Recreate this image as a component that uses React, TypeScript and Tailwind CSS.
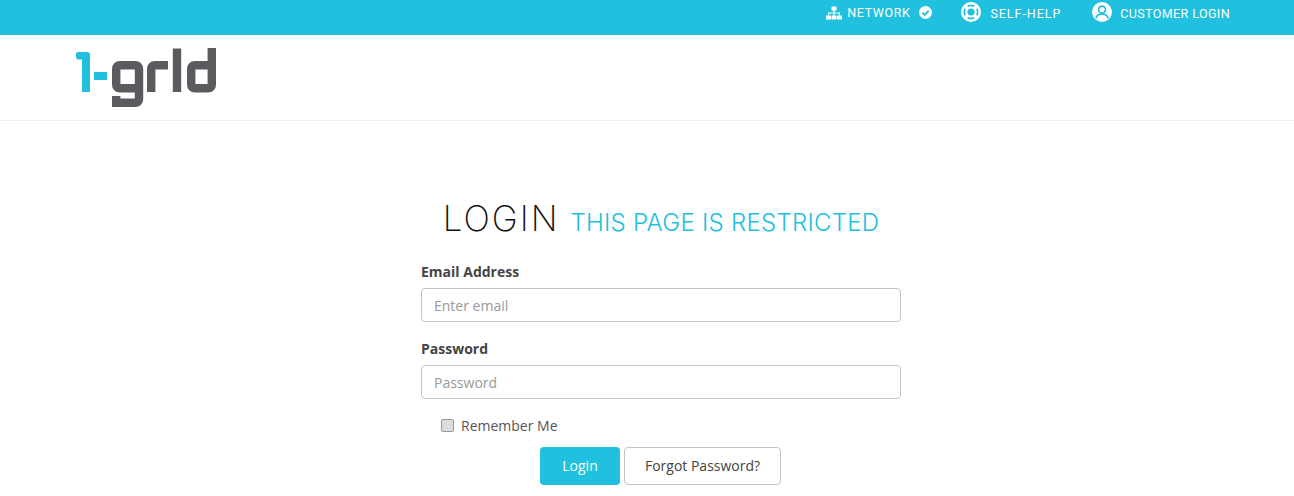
import React from "react";

function SitemapIcon() {
  return (
    <svg width="16" height="14" viewBox="0 0 16 14" fill="#fff">
      <rect x="5.500" y="0.500" width="5" height="4" rx="0.500" />
      <rect x="0" y="9.500" width="5" height="4" rx="0.500" />
      <rect x="5.500" y="9.500" width="5" height="4" rx="0.500" />
      <rect x="11" y="9.500" width="5" height="4" rx="0.500" />
      <path d="M7.400 4h1.200v2.400H14v3.200h-1.200V7.600H8.600v2H7.400v-2H3.200v2H2V6.400h5.400z" />
    </svg>
  );
}

function CheckCircle() {
  return (
    <svg width="13" height="13" viewBox="0 0 14 14">
      <circle cx="7" cy="7" r="7" fill="#fff" />
      <path d="M3.700 7.200l2.400 2.400 4.300-4.400" fill="none" stroke="#20c0de" strokeWidth="2" />
    </svg>
  );
}

function LifeRing() {
  return (
    <svg width="20" height="20" viewBox="0 0 20 20">
      <g fill="none" stroke="#fff">
        <circle cx="10" cy="10" r="8.800" strokeWidth="2.400" />
        <circle cx="10" cy="10" r="4.700" strokeWidth="2.200" />
        <path d="M4 4l3 3M16 4l-3 3M4 16l3-3M16 16l-3-3" strokeWidth="3.600" />
      </g>
    </svg>
  );
}

function UserCircle() {
  return (
    <svg width="20" height="20" viewBox="0 0 20 20">
      <circle cx="10" cy="10" r="10" fill="#fff" />
      <circle cx="10" cy="7.600" r="3.500" fill="none" stroke="#20c0de" strokeWidth="1.700" />
      <path d="M4 16.400c.5-3 2.800-4.200 6-4.200s5.500 1.200 6 4.200" fill="none" stroke="#20c0de" strokeWidth="1.700" />
    </svg>
  );
}

function Logo() {
  return (
    <svg width="142" height="64" viewBox="0 0 142 64">
      <path d="M0 10V8Q0 6 2 6H11Q14 6 14 9V46H6V13.500H2Q0 13.500 0 10z" fill="#20c0de" />
      <rect x="18" y="26" width="13" height="8" fill="#20c0de" />
      <g fill="none" stroke="#5a5a5f" strokeWidth="8.400">
        <path d="M63 42.300H44q-3.800 0-3.800-3.800V23q0-3.800 3.800-3.800H59.200q3.800 0 3.800 3.800V53q0 3.800-3.800 3.800H40.200V50" />
        <path d="M75.200 46V23q0-3.800 3.800-3.800H92" />
        <path d="M101 2.500V46" />
        <path d="M135.800 2V38.500q0 3.800-3.800 3.800H119q-3.800 0-3.800-3.800V23q0-3.800 3.800-3.800H135.800" />
      </g>
    </svg>
  );
}

export default function App() {
  return (
    <div className="w-[1294px] h-[496px] overflow-hidden bg-white font-['Open_Sans','Noto_Sans',sans-serif] text-[#444]">
      <div className="h-[35px] bg-[#20c0de] flex justify-end items-start pr-[64px] pt-[2px] text-white text-[12.5px] font-['Roboto',sans-serif]">
        <div className="flex items-center h-[21px] mr-[28px]">
          <SitemapIcon />
          <span className="ml-[5px] mr-[9px] tracking-[0.6px] mt-[1px]">NETWORK</span>
          <CheckCircle />
        </div>
        <div className="flex items-center h-[20px] mr-[31px]">
          <div className="ml-[1px] flex"><LifeRing /></div>
          <span className="ml-[9px] mt-[4px] tracking-[0.95px]">SELF-HELP</span>
        </div>
        <div className="flex items-center h-[20px]">
          <UserCircle />
          <span className="ml-[8px] mt-[4px] tracking-[0.4px]">CUSTOMER LOGIN</span>
        </div>
      </div>
      <div className="h-[86px] border-b border-[#eeeeee] pl-[76px] pt-[11px]">
        <Logo />
      </div>
      <div className="flex flex-col items-center pt-[71px] pl-[28px]">
        <h1 className="flex items-baseline h-[40px] font-['Inter',sans-serif]">
          <span className="text-[35px] font-extralight text-[#111] tracking-[2px]">LOGIN</span>
          <span className="text-[24px] font-light text-[#20c0de] ml-[11px] tracking-[0.26px]">THIS PAGE IS RESTRICTED</span>
        </h1>
        <form className="w-[480px] mt-[30px] text-[14px]">
          <label className="block font-bold leading-[20px] mb-[6px]">Email Address</label>
          <input
            placeholder="Enter email"
            className="block w-full h-[34px] border border-[#c4c4c4] rounded-[4px] px-[12px] text-[14px] placeholder:text-[#999]"
          />
          <label className="block font-bold leading-[20px] mt-[17px] mb-[6px]">Password</label>
          <input
            placeholder="Password"
            className="block w-full h-[34px] border border-[#c4c4c4] rounded-[4px] px-[12px] text-[14px] placeholder:text-[#999]"
          />
          <label className="flex items-center mt-[16px] ml-[20px] h-[20px] text-[#555]">
            <input type="checkbox" className="appearance-none w-[13px] h-[13px] mr-[7px] bg-[#dddddd] border border-[#999] rounded-[2px]" />
            <span>Remember Me</span>
          </label>
          <div className="flex justify-start gap-[4px] mt-[12px] ml-[119px]">
            <button type="button" className="w-[80px] h-[38px] pb-[2px] bg-[#20c0de] text-white rounded-[4px]">Login</button>
            <button type="button" className="w-[157px] h-[38px] pb-[2px] bg-white border border-[#c4c4c4] rounded-[4px]">Forgot Password?</button>
          </div>
        </form>
      </div>
    </div>
  );
}
